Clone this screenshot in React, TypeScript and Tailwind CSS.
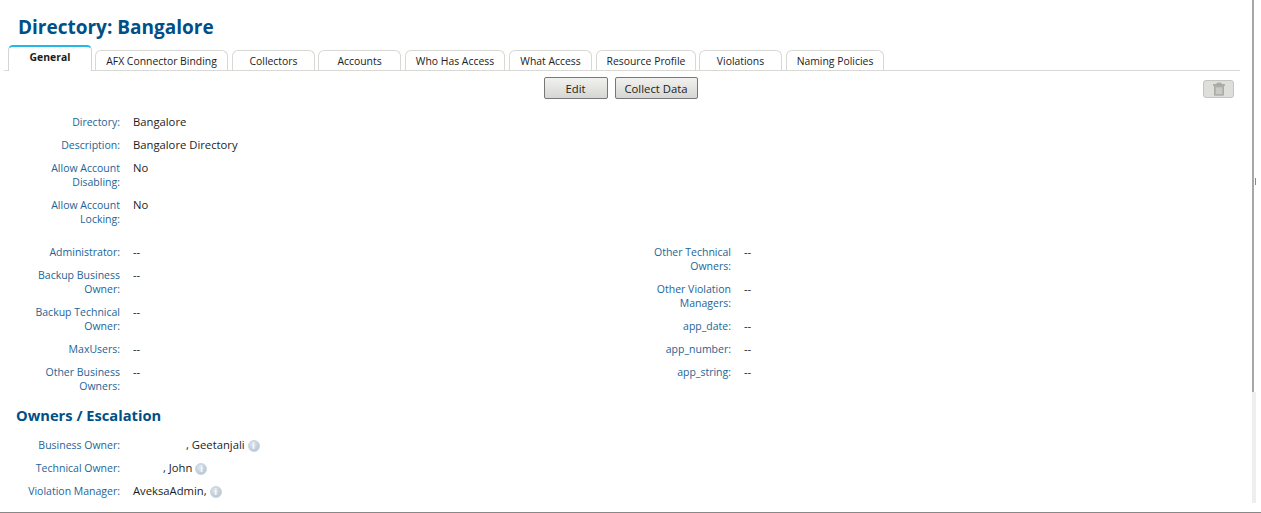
import React from "react";

const L = "w-[120px] shrink-0 text-right text-[10.5px] leading-[14px] text-[#1d6496] pt-[1px]";
const V = "ml-[13px] text-[11.25px] leading-[15px] text-[#1c1c1c]";

function Row({ label, value }: { label: React.ReactNode; value: React.ReactNode }) {
  return (
    <div className="flex">
      <div className={L}>{label}</div>
      <div className={V}>{value}</div>
    </div>
  );
}

function Info() {
  return (
    <span className="inline-block w-[12px] h-[12px] rounded-full bg-[radial-gradient(circle_at_40%_35%,#dfe8ef,#a9bccb)] border border-[#c9d4dc] text-white text-[8px] leading-[10px] text-center ml-[3px] align-[0px] font-bold">i</span>
  );
}

const tabs: [string, number, number][] = [
  ["AFX Connector Binding", 133, 3],
  ["Collectors", 83, 4],
  ["Accounts", 83, 3],
  ["Who Has Access", 100, 4],
  ["What Access", 83, 4],
  ["Resource Profile", 100, 4],
  ["Violations", 83, 3],
  ["Naming Policies", 98, 4],
];

export default function App() {
  return (
    <div className="relative w-[1261px] h-[513px] overflow-hidden bg-white font-['Open_Sans',sans-serif] border-b border-[#888]">
      <div className="w-[1240px] pl-[4px]">
        <h1 className="pl-[14px] pt-[14px] text-[19px] leading-[26px] font-bold text-[#004f86]">Directory: Bangalore</h1>
        <div className="mt-[6px] flex items-end border-b border-[#d8d8d4] h-[25px] pl-[4px]">
          <div className="w-[84px] h-[26px] -mb-px rounded-t-[5px] bg-white border-x border-[#d4d4d0] border-b-0 border-t-2 border-t-[#22b8e8] text-center text-[10.4px] font-bold leading-[21px] text-[#1c1c1c]">General</div>
          {tabs.map(([t, w, m]) => (
            <div key={t} style={{ width: w, marginLeft: m }} className="h-[20px] rounded-t-[6px] border border-b-0 border-[#d8d8d4] bg-white text-center text-[10.4px] leading-[21px] text-[#222]">{t}</div>
          ))}
        </div>
      </div>

      <div className="relative flex justify-center gap-[7px] pt-[6px] w-[1225px] ml-[8px]">
        <button className="w-[64px] h-[22px] rounded-[2px] border border-[#777] bg-gradient-to-b from-[#f1f1ef] to-[#d6d6d2] text-[11.3px] leading-[19px] text-[#222]">Edit</button>
        <button className="w-[83px] h-[22px] rounded-[2px] border border-[#777] bg-gradient-to-b from-[#f1f1ef] to-[#d6d6d2] text-[11.3px] leading-[19px] text-[#222]">Collect Data</button>
        <button className="absolute left-[1195px] top-[9px] w-[31px] h-[18px] rounded-[3px] border border-[#c4c4c0] bg-[#dededb] flex items-center justify-center">
          <svg width="14" height="14" viewBox="0 0 14 14" fill="#b4b4b0" stroke="#a4a4a0" strokeWidth="0.8"><path d="M1.5 2.5h11v1.2h-11zM5 2.5V1h4v1.5" /><path d="M2.5 4.2h9v9h-9z" /><path d="M5 5.5v6.5M7 5.5v6.5M9 5.5v6.5" stroke="#e8e8e6" /></svg>
        </button>
      </div>

      <div className="mt-[15px] flex flex-col gap-[8px]">
        <Row label="Directory:" value="Bangalore" />
        <Row label="Description:" value="Bangalore Directory" />
        <Row label={<>Allow Account<br />Disabling:</>} value="No" />
        <Row label={<>Allow Account<br />Locking:</>} value="No" />
      </div>

      <div className="mt-[18px] flex">
        <div className="w-[611px] flex flex-col gap-[8px]">
          <Row label="Administrator:" value="--" />
          <Row label={<>Backup Business<br />Owner:</>} value="--" />
          <Row label={<>Backup Technical<br />Owner:</>} value="--" />
          <Row label="MaxUsers:" value="--" />
          <Row label={<>Other Business<br />Owners:</>} value="--" />
        </div>
        <div className="flex flex-col gap-[8px]">
          <Row label={<>Other Technical<br />Owners:</>} value="--" />
          <Row label={<>Other Violation<br />Managers:</>} value="--" />
          <Row label="app_date:" value="--" />
          <Row label="app_number:" value="--" />
          <Row label="app_string:" value="--" />
        </div>
      </div>

      <h2 className="pl-[16px] mt-[12px] text-[14.7px] leading-[20px] font-bold text-[#004f86]">Owners / Escalation</h2>
      <div className="mt-[12px] flex flex-col gap-[8px]">
        <Row label="Business Owner:" value={<span className="pl-[53px]">, Geetanjali<Info /></span>} />
        <Row label="Technical Owner:" value={<span className="pl-[30px]">, John<Info /></span>} />
        <Row label="Violation Manager:" value={<span>AveksaAdmin,<Info /></span>} />
      </div>

      <div className="absolute left-[1252px] top-0 h-[392px] w-[2px] bg-[#a8a8a4]" />
      <div className="absolute left-[1252px] top-[392px] h-[111px] w-[4px] bg-[#eeeeec]" />
      <div className="absolute left-[1255px] top-[178px] h-[7px] w-[1px] bg-[#888]" />
    </div>
  );
}
